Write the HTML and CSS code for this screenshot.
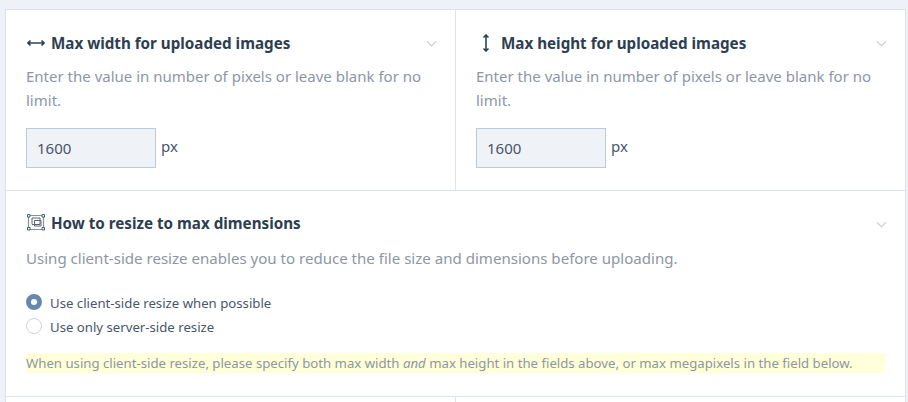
FILE: index.html
```html
<!DOCTYPE html>
<html lang="en">
  <head>
    <meta charset="UTF-8" />
    <meta name="viewport" content="width=device-width, initial-scale=1.0" />
    <title>Image resize settings</title>
    <link rel="stylesheet" href="styles.css">
  </head>
  <body>
    <div class="settings">
      <section class="setting half">
        <svg class="chevron" viewBox="0 0 12 7"><path d="M1 1l5 5 5-5" /></svg>
        <h3>
          <svg class="icon" viewBox="0 0 18 18"><path d="M1 9h16M3.500 6.500L1 9l2.500 2.500M14.500 6.500L17 9l-2.500 2.500" /></svg>
          Max width for uploaded images
        </h3>
        <p class="description">Enter the value in number of pixels or leave blank for no limit.</p>
        <div class="input-row">
          <input class="number-input" type="text" value="1600" />
          <span class="unit">px</span>
        </div>
      </section>

      <section class="setting half">
        <svg class="chevron" viewBox="0 0 12 7"><path d="M1 1l5 5 5-5" /></svg>
        <h3>
          <svg class="icon" viewBox="0 0 18 18"><path d="M9 1v16M6.500 3.500L9 1l2.500 2.500M6.500 14.500L9 17l2.500-2.500" /></svg>
          Max height for uploaded images
        </h3>
        <p class="description">Enter the value in number of pixels or leave blank for no limit.</p>
        <div class="input-row">
          <input class="number-input" type="text" value="1600" />
          <span class="unit">px</span>
        </div>
      </section>

      <section class="setting full">
        <svg class="chevron" viewBox="0 0 12 7"><path d="M1 1l5 5 5-5" /></svg>
        <h3>
          <svg class="icon" viewBox="0 0 18 18">
            <path class="frame" d="M2 1.500h14M2 15.500h14M1.500 1.500v14M16.500 1.500v14" />
            <path class="inner" d="M5 4h8v6.500H5zM7.500 6.500H14V12H7.500z" />
            <path class="corners" d="M.5 .5h2.500v2.500H.5zM15 .5h2.500v2.500H15zM.5 13.500h2.500V16H.5zM15 13.500h2.500V16H15z" />
          </svg>
          How to resize to max dimensions
        </h3>
        <p class="description">Using client-side resize enables you to reduce the file size and dimensions before uploading.</p>
        <div class="radio-list">
          <label class="radio-row"><span class="radio checked"></span>Use client-side resize when possible</label>
          <label class="radio-row"><span class="radio"></span>Use only server-side resize</label>
        </div>
        <p class="notice">When using client-side resize, please specify both max width <em>and</em> max height in the fields above, or max megapixels in the field below.</p>
      </section>

      <section class="setting half next"></section>
      <section class="setting next"></section>
    </div>
  </body>
</html>
```

FILE: styles.css
```css
* {
    box-sizing: border-box;
}

body {
    margin: 0;
    height: 402px;
    overflow: hidden;
    padding: 9px 2px 0 5px;
    background: #eef1f7;
    font-family: "Noto Sans", sans-serif;
    font-size: 15px;
    color: #4a5568;
}

.settings {
    display: grid;
    grid-template-columns: 450px 1fr;
    background: #fff;
    border: 1px solid #dde3ed;
    border-bottom: none;
}

.setting {
    position: relative;
    border-bottom: 1px solid #dde3ed;
    padding: 20px;
}

.half {
    height: 181px;
    border-right: 1px solid #dde3ed;
}

.half:nth-child(2) {
    border-right: none;
}

.full {
    grid-column: 1 / 3;
    height: 206px;
}

.setting.next {
    height: 5px;
    padding: 0;
    border-bottom: none;
}

.chevron {
    position: absolute;
    top: 29.500px;
    right: 18px;
    width: 11px;
    height: 7px;
    fill: none;
    stroke: #ced4de;
    stroke-width: 1.300;
}

h3 {
    display: flex;
    align-items: center;
    gap: 6px;
    margin: 0;
    height: 26px;
    font-size: 15.200px;
    font-weight: 700;
    color: #2d3e50;
}

.icon {
    flex: none;
    width: 18px;
    height: 18px;
    margin-left: 1px;
    fill: none;
    stroke: #2f4054;
    stroke-width: 1.600;
}

.icon .frame {
    stroke: #8a8f96;
    stroke-width: 1.200;
}

.icon .inner {
    stroke: #5b6675;
    stroke-width: 1;
}

.icon .corners {
    stroke: #3f5f85;
    stroke-width: 1;
    fill: #fff;
}

.description {
    margin: 8px 0 0;
    line-height: 24px;
    color: #8e96a5;
}

.input-row {
    display: flex;
    align-items: flex-start;
    gap: 5px;
    margin-top: 16px;
}

.number-input {
    width: 130px;
    height: 40px;
    padding: 0 10px;
    border: 1px solid #bccbdc;
    border-radius: 0;
    background: #eff2f7;
    font-family: inherit;
    font-size: 15px;
    color: #4a5568;
}

.unit {
    line-height: 36px;
}

.full h3 {
    margin-top: -1px;
}

.full .description {
    margin-top: 10px;
    font-size: 15.070px;
}

.radio-list {
    margin-top: 21px;
}

.radio-row {
    display: flex;
    align-items: center;
    gap: 8px;
    height: 24px;
    font-size: 13.200px;
}

.radio {
    width: 16px;
    height: 16px;
    margin-top: -2px;
    border: 1px solid #cfd3d9;
    border-radius: 50%;
    background: #fff;
}

.radio.checked {
    border: 5.500px solid #6788ad;
}

.notice {
    margin: 14px 0 0;
    height: 20px;
    line-height: 20px;
    font-size: 13.200px;
    background: #ffffd9;
    color: #8e96a5;
}
```
